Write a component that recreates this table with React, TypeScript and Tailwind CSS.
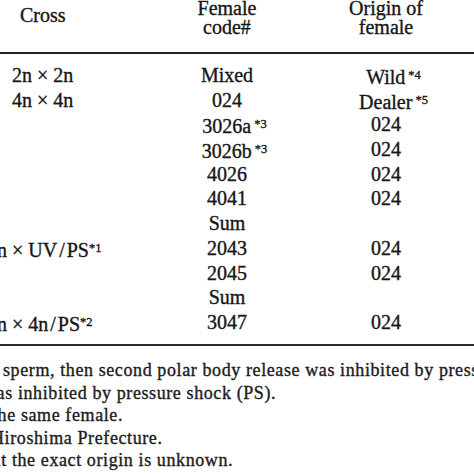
import React from "react";

type Row = { cross?: React.ReactNode; code?: React.ReactNode; origin?: React.ReactNode };

function Sup({ children }: { children: React.ReactNode }) {
  return <span className="text-[12.5px] align-[5px] ml-[3px] mr-[-15px]">{children}</span>;
}

const rows: Row[] = [
  { cross: <span className="ml-[12px]">2n × 2n</span>, code: "Mixed", origin: <>Wild<Sup>*4</Sup></> },
  { cross: <span className="ml-[12px]">4n × 4n</span>, code: "024", origin: <>Dealer<Sup>*5</Sup></> },
  { code: <>3026a<Sup>*3</Sup></>, origin: "024" },
  { code: <>3026b<Sup>*3</Sup></>, origin: "024" },
  { code: "4026", origin: "024" },
  { code: "4041", origin: "024" },
  { code: "Sum" },
  {
    cross: (
      <span className="ml-[-13px]">
        2n × UV<span className="mx-[2px]">/</span>PS<span className="text-[12.5px] align-[5px]">*1</span>
      </span>
    ),
    code: "2043",
    origin: "024",
  },
  { code: "2045", origin: "024" },
  { code: "Sum" },
  {
    cross: (
      <span className="ml-[-13px]">
        2n × 4n<span className="mx-[2px]">/</span>PS<span className="text-[12.5px] align-[5px]">*2</span>
      </span>
    ),
    code: "3047",
    origin: "024",
  },
];

export default function App() {
  return (
    <div className="w-[474px] h-[474px] overflow-hidden bg-white text-[#161616] [-webkit-text-stroke:0.35px_#161616] [font-family:'Liberation_Serif','Times_New_Roman',serif]">
      {/* header */}
      <div className="grid grid-cols-[150px_154px_164px] text-[20px] leading-[19px] mt-[-1px]">
        <div className="pl-[20px] pt-[7px]">Cross</div>
        <div className="text-center">
          <div>Female</div>
          <div>code#</div>
        </div>
        <div className="text-center">
          <div>Origin of</div>
          <div>female</div>
        </div>
      </div>
      <div className="mt-[15px] h-[2px] bg-[#222]" />
      <div className="pt-[9px] text-[20px]">
        {rows.map((r, i) => (
          <div key={i} className="grid grid-cols-[150px_154px_164px] h-[24.7px] leading-[24.7px] whitespace-nowrap">
            <div>{r.cross}</div>
            <div className="text-center">{r.code}</div>
            <div className="text-center">{r.origin}</div>
          </div>
        ))}
      </div>
      <div className="mt-[9.3px] h-[2px] bg-[#2a2a2a]" />
      <div className="mt-[13.5px] text-[18px] leading-[22.5px] tracking-[0.6px] whitespace-nowrap text-[#1e1e1e]">
        <div className="ml-[3px]">sperm, then second polar body release was inhibited by pressure shock</div>
        <div className="ml-[-17px]">was inhibited by pressure shock (PS).</div>
        <div className="ml-[-8px]">the same female.</div>
        <div className="ml-[-9px]">Hiroshima Prefecture.</div>
        <div className="ml-[-18px]">but the exact origin is unknown.</div>
      </div>
    </div>
  );
}
